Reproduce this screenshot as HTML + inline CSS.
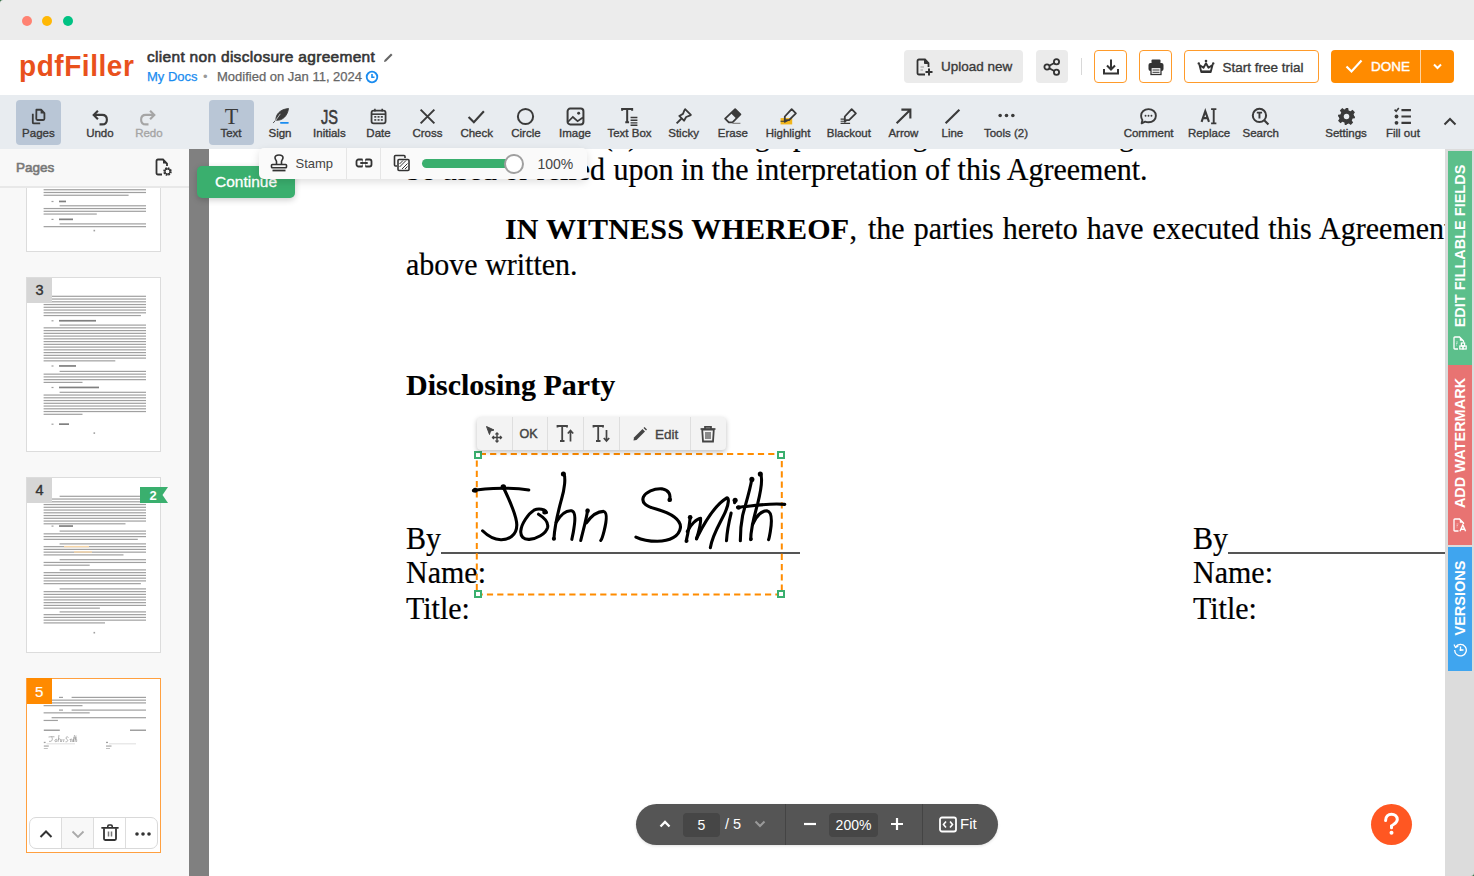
<!DOCTYPE html>
<html><head><meta charset="utf-8">
<style>
*{margin:0;padding:0;box-sizing:border-box}
html,body{width:1474px;height:876px;overflow:hidden;background:#fff;font-family:"Liberation Sans",sans-serif}
.a{position:absolute}
#titlebar{left:0;top:0;width:1474px;height:40px;background:#ececec}
.tl{position:absolute;top:16px;width:10px;height:10px;border-radius:50%}
#header{left:0;top:40px;width:1474px;height:55px;background:#fff}
#toolbar{left:0;top:95px;width:1474px;height:54px;background:#e8ecf0}
.tool{position:absolute;top:99.5px;height:45.5px;text-align:center;color:#3a3a3a}
.tool .lbl{position:absolute;left:-40px;right:-40px;top:27.3px;font-size:11.5px;font-weight:400;-webkit-text-stroke:0.35px currentColor;white-space:nowrap;text-align:center;line-height:13px}
.tool svg{position:absolute;left:50%;top:7.6px;margin-left:-9.5px;width:19px;height:19px;overflow:visible}
.sel{background:#b9c6d6;border-radius:4px}
#sidebar{left:0;top:149px;width:189px;height:727px;background:#f8f8f8;overflow:hidden}
#strip{left:189px;top:149px;width:20px;height:727px;background:#808080}
#doc{left:209px;top:149px;width:1236px;height:727px;background:#fff;overflow:hidden}
.ser{position:absolute;font-family:"Liberation Serif",serif;font-size:30px;color:#000;white-space:nowrap;line-height:30px;transform:scaleY(1.05);transform-origin:0 25px;-webkit-text-stroke:0.2px #000}
#rpanel{left:1445px;top:149px;width:29px;height:727px;background:#dcdcdc}
.tab{position:absolute;left:3px;width:24px}
.tabtxt{position:absolute;left:50%;top:50%;transform:translate(-50%,-50%) rotate(-90deg);color:#fff;font-weight:bold;font-size:14.5px;white-space:nowrap}
.hbtn{position:absolute;top:50px;height:33px;border-radius:4px}
.thumb{position:absolute;left:26px;width:135px;height:175.5px;background:#fff;border:1px solid #dcdcdc}
.badge{position:absolute;left:0;top:0;width:25px;height:25px;background:#d6d6d6;color:#333;font-size:14.5px;text-align:center;line-height:25px;-webkit-text-stroke:0.4px currentColor}
</style></head><body>

<!-- title bar -->
<div id="titlebar" class="a">
  <div class="tl" style="left:22px;background:#ff8272"></div>
  <div class="tl" style="left:42.3px;background:#ffb805"></div>
  <div class="tl" style="left:62.6px;background:#00c283"></div>
</div>

<!-- header -->
<div id="header" class="a">
  <div class="a" style="left:19px;top:11px;font-size:28px;font-weight:bold;color:#e9511c;letter-spacing:0.55px;transform:scaleY(1.04);transform-origin:0 26px">pdfFiller</div>
  <div class="a" style="left:147px;top:7.5px;font-size:15.5px;font-weight:400;color:#353535;white-space:nowrap;letter-spacing:0.3px;-webkit-text-stroke:0.6px #353535">client non disclosure agreement</div>
  <svg class="a" style="left:383px;top:12px" width="11" height="11" viewBox="0 0 11 11"><path d="M1 10 L1.5 8 L8 1.5 L9.5 3 L3 9.5 Z" fill="#666"/></svg>
  <div class="a" style="left:147px;top:29px;font-size:13px;color:#1a8cf0;white-space:nowrap;-webkit-text-stroke:0.25px #1a8cf0">My Docs</div>
  <div class="a" style="left:203px;top:29px;font-size:13px;color:#999">•</div>
  <div class="a" style="left:217px;top:29px;font-size:13px;color:#666;white-space:nowrap;-webkit-text-stroke:0.25px #666">Modified on Jan 11, 2024</div>
  <svg class="a" style="left:365px;top:30px" width="14" height="14" viewBox="0 0 14 14"><circle cx="7" cy="7" r="5.3" fill="none" stroke="#1a8cf0" stroke-width="1.8"/><path d="M7 4 V7.3 H9.5" fill="none" stroke="#1a8cf0" stroke-width="1.6"/></svg>
</div>

<!-- header buttons -->
<div class="hbtn" style="left:904px;width:119px;background:#ebebeb">
  <svg class="a" style="left:12px;top:8px" width="17" height="18" viewBox="0 0 17 18"><path d="M9 16.5 H3 Q1.5 16.5 1.5 15 V3 Q1.5 1.5 3 1.5 H9 L12.5 5 V9" fill="none" stroke="#333" stroke-width="1.8"/><path d="M8.5 1.5 V5.5 H12.5" fill="#333" stroke="#333" stroke-width="1"/><path d="M4.5 9 H8 M4.5 12 H7" stroke="#999" stroke-width="1.2"/><path d="M13 10.5 V17.5 M9.5 14 H16.5" stroke="#333" stroke-width="2"/></svg>
  <div class="a" style="left:37px;top:8.5px;font-size:13.5px;font-weight:400;color:#3a3a3a;white-space:nowrap;-webkit-text-stroke:0.35px #3a3a3a">Upload new</div>
</div>
<div class="hbtn" style="left:1036px;width:32px;background:#ebebeb">
  <svg class="a" style="left:7px;top:8px" width="18" height="18" viewBox="0 0 18 18"><circle cx="4" cy="9" r="2.6" fill="none" stroke="#333" stroke-width="1.8"/><circle cx="13.5" cy="3.8" r="2.6" fill="none" stroke="#333" stroke-width="1.8"/><circle cx="13.5" cy="14.2" r="2.6" fill="none" stroke="#333" stroke-width="1.8"/><path d="M6.2 7.7 L11.3 5 M6.2 10.3 L11.3 13" stroke="#333" stroke-width="1.8"/></svg>
</div>
<div class="a" style="left:1081px;top:58px;width:1px;height:17px;background:#d8d8d8"></div>
<div class="hbtn" style="left:1094px;width:33px;border:1px solid #ff9b2a;background:#fff">
  <svg class="a" style="left:7px;top:7px" width="18" height="18" viewBox="0 0 18 18"><path d="M9 1.5 V11 M5 7.5 L9 11.5 L13 7.5" fill="none" stroke="#333" stroke-width="2"/><path d="M2 11 V15.5 H16 V11" fill="none" stroke="#333" stroke-width="2"/></svg>
</div>
<div class="hbtn" style="left:1139px;width:33px;border:1px solid #ff9b2a;background:#fff">
  <svg class="a" style="left:7px;top:7px" width="18" height="18" viewBox="0 0 18 18"><rect x="4.5" y="1.5" width="9" height="4" rx="1" fill="#333"/><rect x="1.5" y="5" width="15" height="8" rx="2" fill="#333"/><rect x="4" y="9.5" width="10" height="7" fill="#fff" stroke="#333" stroke-width="1.3"/><path d="M5.5 12 H12.5 M5.5 14.3 H12.5" stroke="#333" stroke-width="1"/></svg>
</div>
<div class="hbtn" style="left:1184px;width:135px;border:1px solid #ff9b2a;background:#fff">
  <svg class="a" style="left:12px;top:8px" width="18" height="16" viewBox="0 0 18 16"><circle cx="9" cy="2" r="1.3" fill="#333"/><circle cx="1.8" cy="4.5" r="1.2" fill="#333"/><circle cx="16.2" cy="4.5" r="1.2" fill="#333"/><path d="M2.5 6 L4.3 13 H13.7 L15.5 6 L11.5 8.8 L9 4.3 L6.5 8.8 Z" fill="none" stroke="#333" stroke-width="1.9" stroke-linejoin="round"/><path d="M4.5 12.5 H13.5" stroke="#333" stroke-width="2.2"/></svg>
  <div class="a" style="left:37.5px;top:8.5px;font-size:13.5px;font-weight:400;color:#3a3a3a;white-space:nowrap;-webkit-text-stroke:0.35px #3a3a3a">Start free trial</div>
</div>
<div class="hbtn" style="left:1331px;width:123px;background:#ff8b00">
  <svg class="a" style="left:14px;top:9px" width="18" height="15" viewBox="0 0 18 15"><path d="M1.5 7.5 L6.5 12.5 L16.5 1.5" fill="none" stroke="#fff" stroke-width="2.2"/></svg>
  <div class="a" style="left:40px;top:8.5px;font-size:13.5px;font-weight:400;color:#fff;white-space:nowrap;-webkit-text-stroke:0.4px #fff">DONE</div>
  <div class="a" style="left:89px;top:0;width:1px;height:33px;background:#ffd39e"></div>
  <svg class="a" style="left:101px;top:12px" width="11" height="9" viewBox="0 0 11 9"><path d="M2 2.5 L5.5 6 L9 2.5" fill="none" stroke="#fff" stroke-width="2"/></svg>
</div>

<!-- toolbar -->
<div id="toolbar" class="a"></div>
<div id="tools">
<div class="tool sel" style="left:15.9px;width:45px"><svg viewBox="0 0 18 18"><path d="M7 2.6 H11.5 L14.6 5.7 V11.2 Q14.6 12.3 13.5 12.3 H8 Q6.9 12.3 6.9 11.2 Z" fill="none" stroke="#3a3a3a" stroke-width="1.7" stroke-linejoin="round"/><path d="M11 2.4 V6.2 H14.8 Z" fill="#3a3a3a"/><path d="M3.6 6.3 V14.6 Q3.6 15.6 4.6 15.6 H10.6" fill="none" stroke="#3a3a3a" stroke-width="1.7"/></svg><div class="lbl" style="color:#3a3a3a">Pages</div></div>
<div class="tool" style="left:77.4px;width:45px"><svg viewBox="0 0 18 18"><path d="M4 7.5 H11.5 Q16 7.5 16 12 Q16 16.5 11.5 16.5 H9" fill="none" stroke="#3a3a3a" stroke-width="2"/><path d="M7.5 3.5 L3.5 7.5 L7.5 11.5" fill="none" stroke="#3a3a3a" stroke-width="2"/></svg><div class="lbl" style="color:#3a3a3a">Undo</div></div>
<div class="tool" style="left:126.4px;width:45px"><svg viewBox="0 0 18 18"><path d="M14 7.5 H6.5 Q2 7.5 2 12 Q2 16.5 6.5 16.5 H9" fill="none" stroke="#a5a5a5" stroke-width="2"/><path d="M10.5 3.5 L14.5 7.5 L10.5 11.5" fill="none" stroke="#a5a5a5" stroke-width="2"/></svg><div class="lbl" style="color:#a5a5a5">Redo</div></div>
<div class="tool sel" style="left:208.5px;width:45px"><svg viewBox="0 0 18 18"><text x="9" y="16.5" text-anchor="middle" font-family="Liberation Serif" font-size="21" fill="#3a3a3a">T</text></svg><div class="lbl" style="color:#3a3a3a">Text</div></div>
<div class="tool" style="left:257.5px;width:45px"><svg viewBox="0 0 18 18"><path d="M2 15.2 L7.5 9 M4.6 12 C4.6 7 8.5 2.2 16.6 1.4 C15.6 8.5 11 12.8 5.3 12.6 Z" fill="#3a3a3a" stroke="#3a3a3a" stroke-width="0.8"/><path d="M8.8 6.5 L4.2 13" stroke="#e8ecf0" stroke-width="0.7"/><path d="M9.4 15 H16" stroke="#1a8cf0" stroke-width="1.8" stroke-linecap="round"/></svg><div class="lbl" style="color:#3a3a3a">Sign</div></div>
<div class="tool" style="left:306.9px;width:45px"><svg viewBox="0 0 18 18"><text x="9" y="15.9" text-anchor="middle" font-family="Liberation Sans" font-size="20" fill="#3a3a3a" transform="translate(9 0) scale(0.69 1) translate(-9 0)" stroke="#3a3a3a" stroke-width="0.6">JS</text></svg><div class="lbl" style="color:#3a3a3a">Initials</div></div>
<div class="tool" style="left:356.0px;width:45px"><svg viewBox="0 0 18 18"><rect x="2.4" y="3.4" width="13.3" height="12.1" rx="2" fill="none" stroke="#3a3a3a" stroke-width="1.7"/><path d="M2.4 6.8 H15.7" stroke="#3a3a3a" stroke-width="1.5"/><path d="M5.6 1.7 V4.3 M12.5 1.7 V4.3" stroke="#3a3a3a" stroke-width="1.5"/><g fill="#3a3a3a"><rect x="5" y="8.6" width="1.9" height="1.5"/><rect x="8.1" y="8.6" width="1.9" height="1.5"/><rect x="11.2" y="8.6" width="1.9" height="1.5"/><rect x="5" y="11.5" width="1.9" height="1.5"/><rect x="8.1" y="11.5" width="1.9" height="1.5"/><rect x="11.2" y="11.5" width="1.9" height="1.5"/></g></svg><div class="lbl" style="color:#3a3a3a">Date</div></div>
<div class="tool" style="left:405.0px;width:45px"><svg viewBox="0 0 18 18"><path d="M2.5 2.5 L15.5 15.5 M15.5 2.5 L2.5 15.5" stroke="#3a3a3a" stroke-width="1.9"/></svg><div class="lbl" style="color:#3a3a3a">Cross</div></div>
<div class="tool" style="left:454.2px;width:45px"><svg viewBox="0 0 18 18"><path d="M1.5 9.5 L6.5 14.5 L16 4" fill="none" stroke="#3a3a3a" stroke-width="2"/></svg><div class="lbl" style="color:#3a3a3a">Check</div></div>
<div class="tool" style="left:503.4px;width:45px"><svg viewBox="0 0 18 18"><circle cx="9" cy="9" r="7.2" fill="none" stroke="#3a3a3a" stroke-width="1.9"/></svg><div class="lbl" style="color:#3a3a3a">Circle</div></div>
<div class="tool" style="left:552.5px;width:45px"><svg viewBox="0 0 18 18"><rect x="1.5" y="1.5" width="15" height="15" rx="2.5" fill="none" stroke="#3a3a3a" stroke-width="1.9"/><path d="M2 14 L6.5 9.5 L11 13.5 L16 10" fill="none" stroke="#3a3a3a" stroke-width="1.6"/><circle cx="12" cy="6" r="1.4" fill="#3a3a3a"/></svg><div class="lbl" style="color:#3a3a3a">Image</div></div>
<div class="tool" style="left:607.0px;width:45px"><svg viewBox="0 0 18 18"><path d="M2 3.5 V2 H11.5 V3.5 M6.8 2 V14.5 M5 14.5 H8.6" fill="none" stroke="#3a3a3a" stroke-width="1.9"/><path d="M10 10 H16.5 M10 12.5 H16.5 M10 15 H16.5 M10 17.3 H16.5" stroke="#3a3a3a" stroke-width="1.3"/></svg><div class="lbl" style="color:#3a3a3a">Text Box</div></div>
<div class="tool" style="left:661.1px;width:45px"><svg viewBox="0 0 18 18"><path d="M10.5 2 L16 7.5 L14.8 8.2 L11.5 9.5 L9.5 13 L5 8.5 L8.5 6.5 L9.8 3.2 Z" fill="none" stroke="#3a3a3a" stroke-width="1.7" stroke-linejoin="round"/><path d="M7 11 L2.5 15.5" stroke="#3a3a3a" stroke-width="1.9"/></svg><div class="lbl" style="color:#3a3a3a">Sticky</div></div>
<div class="tool" style="left:710.3px;width:45px"><svg viewBox="0 0 18 18"><path d="M11.5 2 L16.5 7 L9 14.5 H5.5 L2 11 Z" fill="none" stroke="#3a3a3a" stroke-width="1.7" stroke-linejoin="round"/><path d="M11.5 2 L16.5 7 L12.5 11 L7.5 6 Z" fill="#3a3a3a"/><path d="M9 15.5 H16.5" stroke="#888" stroke-width="1.2"/></svg><div class="lbl" style="color:#3a3a3a">Erase</div></div>
<div class="tool" style="left:765.5px;width:45px"><svg viewBox="0 0 18 18"><rect x="1.5" y="10.5" width="11" height="6" fill="#f1b51c"/><path d="M1.5 13.5 H8" stroke="#3a3a3a" stroke-width="1"/><path d="M12 2 L16 6 L9.5 12.5 L7 12.5 L5.5 14 L5.5 11 L5.5 9 Z" fill="none" stroke="#3a3a3a" stroke-width="1.7" stroke-linejoin="round"/></svg><div class="lbl" style="color:#3a3a3a">Highlight</div></div>
<div class="tool" style="left:826.4px;width:45px"><svg viewBox="0 0 18 18"><path d="M1.5 11.5 H6 M1.5 13.5 H6 M1.5 15.5 H10.5" stroke="#3a3a3a" stroke-width="1"/><path d="M12 2 L16 6 L9.5 12.5 L7 12.5 L5.5 14 L5.5 11 L5.5 9 Z" fill="none" stroke="#3a3a3a" stroke-width="1.7" stroke-linejoin="round"/></svg><div class="lbl" style="color:#3a3a3a">Blackout</div></div>
<div class="tool" style="left:880.9px;width:45px"><svg viewBox="0 0 18 18"><path d="M2.5 15.5 L15.5 2.5 M7 2.5 H15.5 V11" fill="none" stroke="#3a3a3a" stroke-width="2"/></svg><div class="lbl" style="color:#3a3a3a">Arrow</div></div>
<div class="tool" style="left:929.9px;width:45px"><svg viewBox="0 0 18 18"><path d="M2.5 15.5 L15.5 2.5" stroke="#3a3a3a" stroke-width="2"/></svg><div class="lbl" style="color:#3a3a3a">Line</div></div>
<div class="tool" style="left:983.5px;width:45px"><svg viewBox="0 0 18 18"><circle cx="3" cy="8" r="1.7" fill="#3a3a3a"/><circle cx="9" cy="8" r="1.7" fill="#3a3a3a"/><circle cx="15" cy="8" r="1.7" fill="#3a3a3a"/></svg><div class="lbl" style="color:#3a3a3a">Tools (2)</div></div>
<div class="tool" style="left:1126.1px;width:45px"><svg viewBox="0 0 18 18"><path d="M9 2 C13 2 16 4.8 16 8.3 C16 11.8 13 14.5 9 14.5 C7.8 14.5 6.8 14.3 5.8 13.9 L2.5 15.5 L3.2 12.3 C2.4 11.2 2 9.8 2 8.3 C2 4.8 5 2 9 2 Z" fill="none" stroke="#3a3a3a" stroke-width="1.8" stroke-linejoin="round"/><circle cx="6.2" cy="8.3" r="0.9" fill="#3a3a3a"/><circle cx="9" cy="8.3" r="0.9" fill="#3a3a3a"/><circle cx="11.8" cy="8.3" r="0.9" fill="#3a3a3a"/></svg><div class="lbl" style="color:#3a3a3a">Comment</div></div>
<div class="tool" style="left:1186.5px;width:45px"><svg viewBox="0 0 18 18"><path d="M1.5 14 L5 4 L8.5 14 M3 10.5 H7" fill="none" stroke="#3a3a3a" stroke-width="2"/><path d="M10.5 2 H15.5 M10.5 15.5 H15.5 M13 2 V15.5" stroke="#3a3a3a" stroke-width="1.8"/></svg><div class="lbl" style="color:#3a3a3a">Replace</div></div>
<div class="tool" style="left:1238.2px;width:45px"><svg viewBox="0 0 18 18"><circle cx="8" cy="8" r="6.3" fill="none" stroke="#3a3a3a" stroke-width="1.9"/><path d="M12.5 12.5 L16.5 16.5" stroke="#3a3a3a" stroke-width="2"/><path d="M5.5 5.3 H10.5 M8 5.3 V11" stroke="#3a3a3a" stroke-width="1.8"/></svg><div class="lbl" style="color:#3a3a3a">Search</div></div>
<div class="tool" style="left:1323.5px;width:45px"><svg viewBox="0 0 18 18"><g transform="translate(9 9)"><path d="M-1.6 -8 H1.6 L2 -5.8 L3.9 -5 L5.7 -6.3 L8 -4 L6.7 -2.2 L7.4 -0.3 L8 0 V1.6 L5.8 2 L5 3.9 L6.3 5.7 L4 8 L2.2 6.7 L0.3 7.4 L0 8 H-1.6 L-2 5.8 L-3.9 5 L-5.7 6.3 L-8 4 L-6.7 2.2 L-7.4 0.3 L-8 0 V-1.6 L-5.8 -2 L-5 -3.9 L-6.3 -5.7 L-4 -8 L-2.2 -6.7 L-0.3 -7.4 Z" fill="#3a3a3a"/><circle r="2.6" fill="#e8ecf0"/></g></svg><div class="lbl" style="color:#3a3a3a">Settings</div></div>
<div class="tool" style="left:1380.4px;width:45px"><svg viewBox="0 0 18 18"><path d="M1.5 2.5 L3 4 L5.5 1" fill="none" stroke="#3a3a3a" stroke-width="1.5"/><circle cx="3.3" cy="9" r="1.8" fill="#3a3a3a"/><circle cx="3.3" cy="15" r="1.8" fill="#3a3a3a"/><path d="M8 3 H17 M8 9 H17 M8 15 H17" stroke="#3a3a3a" stroke-width="2"/></svg><div class="lbl" style="color:#3a3a3a">Fill out</div></div>
<svg class="a" style="left:1443px;top:116px" width="14" height="10" viewBox="0 0 14 10"><path d="M1.5 8.5 L7 3 L12.5 8.5" fill="none" stroke="#3a3a3a" stroke-width="2"/></svg>
</div>

<!-- sidebar -->
<div id="sidebar" class="a">
  <div class="a" style="left:16px;top:11px;font-size:13.5px;font-weight:400;color:#777;-webkit-text-stroke:0.6px #777">Pages</div>
  <svg class="a" style="left:155px;top:9px" width="18" height="19" viewBox="0 0 18 19"><path d="M7 16.5 H3 Q1.5 16.5 1.5 15 V3 Q1.5 1.5 3 1.5 H8 L12 5.5 V8" fill="none" stroke="#333" stroke-width="1.8"/><path d="M8 1.5 V5.5 H12" fill="#333"/><g transform="translate(12.5 13.5)"><circle r="3.2" fill="none" stroke="#333" stroke-width="2.2" stroke-dasharray="1.6 0.9"/><circle r="2.6" fill="none" stroke="#333" stroke-width="1.2"/></g></svg>
  <div class="a" style="left:0;top:38px;width:189px;height:689px;overflow:hidden">
  <div class="thumb" style="top:-111px"><svg class="a" style="left:0;top:0" width="135" height="175" viewBox="0 0 135 175"><g fill="#a0a0a0"><rect x="16.6" y="109.40" width="102.4" height="1.2"/><rect x="16.6" y="112.15" width="102.4" height="1.2"/><rect x="16.6" y="114.90" width="102.4" height="1.2"/><rect x="16.6" y="117.65" width="85.0" height="1.2"/><rect x="32" y="123.6" width="7" height="1.7" fill="#808080"/><rect x="24.5" y="123.9" width="2" height="1.2"/><rect x="32.6" y="128.20" width="86.4" height="1.2"/><rect x="16.6" y="130.95" width="102.4" height="1.2"/><rect x="16.6" y="133.70" width="102.4" height="1.2"/><rect x="16.6" y="136.45" width="53.2" height="1.2"/><rect x="32" y="141.5" width="14" height="1.7" fill="#808080"/><rect x="24.5" y="141.8" width="2" height="1.2"/><rect x="32.6" y="146.30" width="86.4" height="1.2"/><rect x="16.6" y="149.05" width="102.4" height="1.2"/><rect x="66.5" y="152.8" width="1.6" height="1.6"/></g></svg></div><div class="thumb" style="top:89.5px"><svg class="a" style="left:0;top:0" width="135" height="175" viewBox="0 0 135 175"><g fill="#a0a0a0"><rect x="16.6" y="17.70" width="102.4" height="1.2"/><rect x="16.6" y="20.45" width="102.4" height="1.2"/><rect x="16.6" y="23.20" width="102.4" height="1.2"/><rect x="16.6" y="25.95" width="102.4" height="1.2"/><rect x="16.6" y="28.70" width="102.4" height="1.2"/><rect x="16.6" y="31.45" width="102.4" height="1.2"/><rect x="16.6" y="34.20" width="102.4" height="1.2"/><rect x="16.6" y="36.95" width="97.3" height="1.2"/><rect x="32" y="41.9" width="37" height="1.7" fill="#808080"/><rect x="24.5" y="42.2" width="2" height="1.2"/><rect x="32.6" y="46.50" width="86.4" height="1.2"/><rect x="16.6" y="49.25" width="102.4" height="1.2"/><rect x="16.6" y="52.00" width="102.4" height="1.2"/><rect x="16.6" y="54.75" width="102.4" height="1.2"/><rect x="16.6" y="57.50" width="102.4" height="1.2"/><rect x="16.6" y="60.25" width="102.4" height="1.2"/><rect x="16.6" y="63.00" width="102.4" height="1.2"/><rect x="16.6" y="65.75" width="102.4" height="1.2"/><rect x="16.6" y="68.50" width="102.4" height="1.2"/><rect x="16.6" y="71.25" width="102.4" height="1.2"/><rect x="16.6" y="74.00" width="102.4" height="1.2"/><rect x="16.6" y="76.75" width="102.4" height="1.2"/><rect x="16.6" y="79.50" width="102.4" height="1.2"/><rect x="16.6" y="82.25" width="71.7" height="1.2"/><rect x="32" y="87.1" width="17" height="1.7" fill="#808080"/><rect x="24.5" y="87.4" width="2" height="1.2"/><rect x="32.6" y="92.80" width="86.4" height="1.2"/><rect x="16.6" y="95.55" width="102.4" height="1.2"/><rect x="16.6" y="98.30" width="102.4" height="1.2"/><rect x="16.6" y="101.05" width="102.4" height="1.2"/><rect x="16.6" y="103.80" width="38.9" height="1.2"/><rect x="32" y="108.6" width="40" height="1.7" fill="#808080"/><rect x="24.5" y="108.9" width="2" height="1.2"/><rect x="32.6" y="113.70" width="86.4" height="1.2"/><rect x="16.6" y="116.45" width="102.4" height="1.2"/><rect x="16.6" y="119.20" width="102.4" height="1.2"/><rect x="16.6" y="121.95" width="102.4" height="1.2"/><rect x="16.6" y="124.70" width="102.4" height="1.2"/><rect x="16.6" y="127.45" width="102.4" height="1.2"/><rect x="16.6" y="130.20" width="102.4" height="1.2"/><rect x="16.6" y="132.95" width="102.4" height="1.2"/><rect x="16.6" y="135.70" width="38.9" height="1.2"/><rect x="32" y="145.3" width="10" height="1.7" fill="#808080"/><rect x="24.5" y="145.6" width="2" height="1.2"/><rect x="66.5" y="154.3" width="1.6" height="1.6"/></g></svg><div class="badge">3</div></div><div class="thumb" style="top:290px"><svg class="a" style="left:0;top:0" width="135" height="175" viewBox="0 0 135 175"><g fill="#a0a0a0"><rect x="32.6" y="17.70" width="86.4" height="1.2"/><rect x="16.6" y="20.45" width="102.4" height="1.2"/><rect x="16.6" y="23.20" width="102.4" height="1.2"/><rect x="16.6" y="25.95" width="102.4" height="1.2"/><rect x="16.6" y="28.70" width="102.4" height="1.2"/><rect x="16.6" y="31.45" width="102.4" height="1.2"/><rect x="16.6" y="34.20" width="102.4" height="1.2"/><rect x="16.6" y="36.95" width="102.4" height="1.2"/><rect x="16.6" y="39.70" width="102.4" height="1.2"/><rect x="16.6" y="42.45" width="102.4" height="1.2"/><rect x="16.6" y="45.20" width="81.9" height="1.2"/><rect x="32" y="47.2" width="14" height="1.7" fill="#808080"/><rect x="24.5" y="47.5" width="2" height="1.2"/><rect x="32.6" y="52.50" width="86.4" height="1.2"/><rect x="16.6" y="55.25" width="102.4" height="1.2"/><rect x="16.6" y="58.00" width="102.4" height="1.2"/><rect x="16.6" y="60.75" width="94.2" height="1.2"/><rect x="32.6" y="65.30" width="86.4" height="1.2"/><rect x="16.6" y="68.05" width="102.4" height="1.2"/><rect x="16.6" y="70.80" width="102.4" height="1.2"/><rect x="16.6" y="73.55" width="102.4" height="1.2"/><rect x="16.6" y="76.30" width="79.9" height="1.2"/><rect x="32.6" y="81.10" width="86.4" height="1.2"/><rect x="16.6" y="83.85" width="102.4" height="1.2"/><rect x="16.6" y="86.60" width="46.1" height="1.2"/><rect x="32.6" y="91.30" width="86.4" height="1.2"/><rect x="16.6" y="94.05" width="102.4" height="1.2"/><rect x="16.6" y="96.80" width="102.4" height="1.2"/><rect x="16.6" y="99.55" width="102.4" height="1.2"/><rect x="16.6" y="102.30" width="102.4" height="1.2"/><rect x="16.6" y="105.05" width="97.3" height="1.2"/><rect x="32.6" y="110.30" width="86.4" height="1.2"/><rect x="16.6" y="113.05" width="102.4" height="1.2"/><rect x="16.6" y="115.80" width="102.4" height="1.2"/><rect x="16.6" y="118.55" width="102.4" height="1.2"/><rect x="16.6" y="121.30" width="102.4" height="1.2"/><rect x="16.6" y="124.05" width="102.4" height="1.2"/><rect x="16.6" y="126.80" width="102.4" height="1.2"/><rect x="16.6" y="129.55" width="56.3" height="1.2"/><rect x="32.6" y="133.30" width="86.4" height="1.2"/><rect x="16.6" y="136.05" width="102.4" height="1.2"/><rect x="16.6" y="138.80" width="102.4" height="1.2"/><rect x="16.6" y="141.55" width="102.4" height="1.2"/><rect x="16.6" y="144.30" width="61.4" height="1.2"/><rect x="66.5" y="153.9" width="1.6" height="1.6"/><rect x="37" y="67.9" width="25" height="1.4" fill="#f7d6a8"/><rect x="47" y="73.3" width="18" height="1.4" fill="#f7d6a8"/></g></svg><div class="badge">4</div></div><svg class="a" style="left:140px;top:300px" width="29" height="17" viewBox="0 0 29 17"><path d="M0 0 H28 L22.5 8 L28 16 H0 Z" fill="#3aaf6e"/><text x="13" y="12.5" text-anchor="middle" font-family="Liberation Sans" font-weight="bold" font-size="13" fill="#fff">2</text></svg><div class="thumb" style="top:490.5px;border:1.5px solid #ffa040"><svg class="a" style="left:0;top:0" width="135" height="175" viewBox="0 0 135 175"><g fill="#a0a0a0"><rect x="44.6" y="17.80" width="74.4" height="1.2"/><rect x="16.6" y="20.55" width="102.4" height="1.2"/><rect x="16.6" y="23.30" width="102.4" height="1.2"/><rect x="16.6" y="26.05" width="38.9" height="1.2"/><rect x="32" y="17.8" width="4" height="1.2"/><rect x="44.6" y="30.50" width="74.4" height="1.2"/><rect x="16.6" y="33.25" width="46.1" height="1.2"/><rect x="32" y="30.5" width="4" height="1.2"/><rect x="24.6" y="38.10" width="94.4" height="1.2"/><rect x="16.6" y="40.85" width="14.3" height="1.2"/><rect x="16.8" y="50.5" width="16" height="1.5"/><rect x="103" y="50.5" width="16" height="1.5"/><rect x="16.8" y="62.8" width="1.8" height="1.3"/><rect x="19.5" y="64.6" width="28.5" height="0.6" fill="#c8c8c8"/><rect x="16.8" y="66.5" width="5" height="1.1"/><rect x="16.8" y="69" width="4" height="1" fill="#c0c0c0"/><rect x="79" y="62.8" width="2" height="1.3"/><rect x="82" y="64.6" width="27" height="0.6" fill="#c8c8c8"/><rect x="79" y="66.5" width="5.5" height="1.1"/><rect x="79" y="69" width="4" height="1" fill="#c0c0c0"/><path d="M21.5 58 C23.5 57.6 25.5 57.6 27.5 57.8 M24.5 57.6 C26 60 25.5 63 22 62.3 M28 61 C29.5 59.5 30.5 60.5 29.5 62.5 C28.5 63 27.5 62.5 28 61 M32 56 L31 63 M31.3 60.5 C33 59 34 60 33.5 63 M35 60 L34.5 63 M37 60 L36.5 63 M41.5 58.5 C40 57 38 58.5 39.5 60 C41.5 61 41 63 38.5 62.8 M42.5 61 C43.5 59.5 44 60 43.5 63 M44 60.5 C44.5 59.5 45.5 59.5 45 63 M46.5 60 L46 63 M47.5 56 L46.5 63 M49 56.5 L48 63 M46 59 H50 M48.5 60.5 C49.5 59.5 50 60.5 49.5 63" stroke="#777" stroke-width="0.55" fill="none"/></g></svg><div class="badge" style="background:#ff8a00;color:#fff;left:-0.5px;top:-0.5px;width:25.5px;height:25.5px;line-height:27px;font-size:15px;-webkit-text-stroke:0.2px #fff">5</div><div class="a" style="left:2px;top:138.3px;width:129px;height:32.5px;background:#fff;border:1px solid #d9d9d9;border-radius:7px;overflow:hidden">
<div class="a" style="left:31px;top:0;width:33px;height:33px;background:#f8f8f8;border-left:1px solid #ddd;border-right:1px solid #ddd"></div>
<div class="a" style="left:95px;top:0;width:1px;height:33px;background:#ddd"></div>
<svg class="a" style="left:8px;top:9px" width="16" height="14" viewBox="0 0 16 14"><path d="M2.5 10 L8 4.5 L13.5 10" fill="none" stroke="#333" stroke-width="2"/></svg>
<svg class="a" style="left:40px;top:9px" width="16" height="14" viewBox="0 0 16 14"><path d="M2.5 4.5 L8 10 L13.5 4.5" fill="none" stroke="#aaa" stroke-width="1.8"/></svg>
<svg class="a" style="left:71px;top:6.5px" width="18" height="18" viewBox="0 0 18 18"><path d="M1 3.8 H17" stroke="#333" stroke-width="1.7" stroke-linecap="round"/><path d="M6.8 3.5 V2.2 Q6.8 1 8 1 H10 Q11.2 1 11.2 2.2 V3.5" fill="none" stroke="#333" stroke-width="1.6"/><path d="M3 4.2 V14.8 Q3 16 4.2 16 H13.8 Q15 16 15 14.8 V4.2" fill="none" stroke="#333" stroke-width="1.8"/><path d="M7.5 7.5 V12.5 M10.5 7.5 V12.5" stroke="#777" stroke-width="1.5"/></svg>
<svg class="a" style="left:104px;top:12px" width="18" height="8" viewBox="0 0 18 8"><circle cx="3" cy="4" r="1.8" fill="#333"/><circle cx="9" cy="4" r="1.8" fill="#333"/><circle cx="15" cy="4" r="1.8" fill="#333"/></svg>
</div></div>
  </div>
  <div class="a" style="left:0;top:37px;width:189px;height:1.5px;background:#e8e8e8"></div>
</div>
<div id="strip" class="a"></div>

<!-- document -->
<div id="doc" class="a">
  <div class="ser" style="left:394px;top:-29px">(h)</div>
  <div class="ser" style="left:492.5px;top:-29px;word-spacing:2px">Paragraph headings used in this Agreement are for reference only and shall not</div>
  <div class="ser" style="left:197px;top:6px">be used or relied</div><div class="ser" style="left:404.5px;top:6px">upon in the interpretation of this Agreement.</div>
  <div class="ser" style="left:296px;top:65.4px;letter-spacing:0.2px;transform:none;-webkit-text-stroke:0.1px #000"><b>IN WITNESS WHEREOF</b></div><div class="ser" style="left:640.5px;top:65.4px">,</div><div class="ser" style="left:659px;top:65.4px;word-spacing:1.6px">the parties hereto have executed this Agreement as of the date first</div>
  <div class="ser" style="left:197px;top:100.6px">above written.</div>
  <div class="ser" style="left:197px;top:221px;transform:none;-webkit-text-stroke:0.1px #000"><b>Disclosing Party</b></div>
  <div class="ser" style="left:197px;top:374.5px">By</div>
  <div class="a" style="left:232px;top:403px;width:359px;height:1.5px;background:#555"></div>
  <div class="ser" style="left:197px;top:409px">Name:</div>
  <div class="ser" style="left:197px;top:445px">Title:</div>
  <div class="ser" style="left:984px;top:374.5px">By</div>
  <div class="a" style="left:1019px;top:403px;width:260px;height:1.5px;background:#555"></div>
  <div class="ser" style="left:984px;top:409px">Name:</div>
  <div class="ser" style="left:984px;top:445px">Title:</div>
</div>

<div id="rpanel" class="a">
  <div class="tab" style="top:2px;height:214px;background:#5cbf8b"><div class="tabtxt" style="margin-top:-12px">EDIT FILLABLE FIELDS</div>
    <svg class="a" style="left:5px;top:185px" width="14" height="14" viewBox="0 0 14 14"><path d="M5 13 H1.8 Q1 13 1 12.2 V1.8 Q1 1 1.8 1 H6.5 L10.5 5 V6.5" fill="none" stroke="#fff" stroke-width="1.3"/><path d="M6.8 1.3 V4.8 H10.3 Z" fill="#fff"/><path d="M3 6 H5 M3 7.5 H4.5 M3 9 H4" stroke="#cfeedd" stroke-width="0.8"/><rect x="6.8" y="10" width="3.2" height="3" fill="none" stroke="#fff" stroke-width="1.2"/><rect x="10" y="10" width="3.2" height="3" fill="none" stroke="#fff" stroke-width="1.2"/><rect x="8.4" y="7" width="3.2" height="3" fill="none" stroke="#fff" stroke-width="1.2"/></svg>
  </div>
  <div class="tab" style="top:216px;height:180px;background:#e87372"><div class="tabtxt" style="margin-top:-12px">ADD WATERMARK</div>
    <svg class="a" style="left:5px;top:153px" width="14" height="14" viewBox="0 0 14 14"><path d="M5.5 13 H1.8 Q1 13 1 12.2 V1.8 Q1 1 1.8 1 H6.5 L10.5 5 V6" fill="none" stroke="#fff" stroke-width="1.3"/><path d="M6.8 1.3 V4.8 H10.3 Z" fill="#fff"/><path d="M3.5 6 H5.5 M3.5 7.5 H5 M3.5 9 H4.5" stroke="#f5c5c4" stroke-width="0.8"/><path d="M7 13.3 L9.8 7 L12.6 13.3 M8 11.2 H11.6" fill="none" stroke="#fff" stroke-width="1.4"/></svg>
  </div>
  <div class="tab" style="top:398px;height:124px;background:#3fa5ef"><div class="tabtxt" style="margin-top:-11px">VERSIONS</div>
    <svg class="a" style="left:4.5px;top:95px" width="15" height="15" viewBox="0 0 15 15"><path d="M2.6 5 A5.8 5.8 0 1 1 1.7 8" fill="none" stroke="#fff" stroke-width="1.3"/><path d="M1 2.5 L2.5 5.5 L5.3 4.3" fill="none" stroke="#fff" stroke-width="1.2"/><path d="M7.5 4.5 V8 H10.5" fill="none" stroke="#fff" stroke-width="1.3"/><circle cx="7.5" cy="8" r="1" fill="#fff"/></svg>
  </div>
</div>
<div id="overlay">
<!-- Continue -->
<div class="a" style="left:197px;top:166px;width:98px;height:32px;background:#3aaf6e;border-radius:5px;box-shadow:0 2px 6px rgba(0,0,0,0.2)">
  <div class="a" style="left:0;width:98px;top:7px;text-align:center;font-size:15.5px;color:#fff;-webkit-text-stroke:0.3px #fff">Continue</div>
</div>
<!-- stamp toolbar -->
<div class="a" style="left:258.5px;top:148px;width:328px;height:31px;background:#fafafa;border-radius:5px;box-shadow:0 3px 9px rgba(0,0,0,0.13)">
  <svg class="a" style="left:11px;top:6px" width="18" height="18" viewBox="0 0 18 18"><path d="M6.5 10 V7.5 C6.5 6.5 5 5.5 5 3.8 C5 2 7 1 9 1 C11 1 13 2 13 3.8 C13 5.5 11.5 6.5 11.5 7.5 V10" fill="none" stroke="#333" stroke-width="1.6"/><rect x="1.5" y="10.5" width="15" height="3.2" rx="0.8" fill="none" stroke="#333" stroke-width="1.6"/><path d="M2.5 16.5 H15.5" stroke="#333" stroke-width="1.8"/></svg>
  <div class="a" style="left:37px;top:8px;font-size:13px;color:#444">Stamp</div>
  <div class="a" style="left:87px;top:0;width:1px;height:31px;background:#e6e6e6"></div>
  <svg class="a" style="left:96px;top:7px" width="18" height="16" viewBox="0 0 18 16"><rect x="1.5" y="4.5" width="7" height="7" rx="2" fill="none" stroke="#333" stroke-width="1.8"/><rect x="9.5" y="4.5" width="7" height="7" rx="2" fill="none" stroke="#333" stroke-width="1.8"/><path d="M5.5 8 H12.5" stroke="#333" stroke-width="1.8"/><rect x="7.8" y="3" width="2.4" height="10" fill="#fff"/><path d="M5.5 8 H12.5" stroke="#333" stroke-width="1.8"/></svg>
  <div class="a" style="left:121px;top:0;width:1px;height:31px;background:#e6e6e6"></div>
  <svg class="a" style="left:134px;top:6px" width="18" height="18" viewBox="0 0 18 18"><path d="M12 4 V2.5 Q12 1.5 11 1.5 H2.5 Q1.5 1.5 1.5 2.5 V11 Q1.5 12 2.5 12 H4" fill="none" stroke="#333" stroke-width="1.6"/><rect x="5" y="5.5" width="11" height="11" rx="1" fill="none" stroke="#333" stroke-width="1.6"/><path d="M6.5 13 L13 6.5 M6.5 10 L10 6.5 M9 15 L14.5 9.5 M12 15 L14.5 12.5" stroke="#333" stroke-width="1"/></svg>
  <div class="a" style="left:163px;top:11px;width:96px;height:8.6px;background:#3aaf6e;border-radius:5px"></div>
  <div class="a" style="left:245.5px;top:5.5px;width:19.5px;height:20px;background:#fff;border:2px solid #a0a0a0;border-radius:50%"></div>
  <div class="a" style="left:279px;top:7.8px;font-size:14px;color:#444">100%</div>
</div>

<!-- signature -->
<svg class="a" style="left:470px;top:448px" width="320" height="155"><rect x="6.8" y="6" width="305" height="140.6" fill="none" stroke="#ff8c00" stroke-width="2" stroke-dasharray="6.2 4.1" stroke-dashoffset="-3"/></svg>
<div class="a" style="left:474px;top:451px;width:8px;height:8px;border:2px solid #3aaf6e;background:#fff"></div>
<div class="a" style="left:777px;top:451px;width:8px;height:8px;border:2px solid #3aaf6e;background:#fff"></div>
<div class="a" style="left:474px;top:590px;width:8px;height:8px;border:2px solid #3aaf6e;background:#fff"></div>
<div class="a" style="left:777px;top:590px;width:8px;height:8px;border:2px solid #3aaf6e;background:#fff"></div>
<svg class="a" style="left:0;top:0;overflow:visible" width="1474" height="876">
 <g fill="none" stroke="#000" stroke-width="27" stroke-linecap="round" stroke-linejoin="round" transform="translate(470 460) scale(0.11416)">
  <path d="M30,268 C100,250 200,248 290,247 C380,247 450,252 515,262"/>
  <path d="M290,235 C340,340 410,480 410,570 C410,660 340,700 270,698 C200,696 150,660 110,620"/>
  <path d="M600,475 C650,505 690,540 680,590 C665,650 580,690 520,695 C470,698 440,670 445,620 C450,560 510,470 560,440 C600,420 660,430 670,460"/>
  <path d="M820,120 C840,150 830,250 800,350 C770,460 740,600 735,690"/>
  <path d="M755,545 C800,470 850,440 890,445 C930,455 920,540 910,600 C905,640 895,680 892,695"/>
  <path d="M1030,440 C1020,520 990,620 970,705"/>
  <path d="M1020,550 C1070,480 1120,450 1170,450 C1210,460 1190,560 1175,620 C1165,660 1150,700 1145,705"/>
  <g fill="#000" stroke="none"><circle cx="45" cy="265" r="22"/><circle cx="292" cy="236" r="24"/><circle cx="655" cy="455" r="22"/><circle cx="818" cy="122" r="22"/><circle cx="1030" cy="445" r="20"/><circle cx="735" cy="690" r="18"/></g>
 </g>
 <g fill="none" stroke="#000" stroke-width="27" stroke-linecap="round" stroke-linejoin="round" transform="translate(625 460) scale(0.11534)">
  <path d="M385,350 C400,300 380,260 320,250 C250,245 180,280 160,320 C140,370 180,400 270,425 C400,460 490,520 480,590 C470,660 390,705 280,705 C190,705 140,690 95,668"/>
  <path d="M565,495 C560,560 545,640 530,705"/>
  <path d="M540,620 C570,560 620,510 655,505 C660,540 640,620 620,685"/>
  <path d="M620,680 C680,560 780,390 880,330 C905,320 900,380 870,450 C830,540 760,640 740,760"/>
  <path d="M955,350 L950,370"/>
  <path d="M920,460 C900,540 885,620 880,700"/>
  <path d="M1100,165 C1080,280 1040,400 1020,480 C1000,580 1000,650 1000,700"/>
  <path d="M975,410 C1100,400 1250,370 1385,385"/>
  <path d="M1175,120 C1195,160 1180,260 1150,380 C1110,520 1090,620 1090,690"/>
  <path d="M1105,560 C1140,480 1190,440 1230,440 C1280,450 1270,560 1260,620 C1255,650 1250,680 1245,690"/>
  <g fill="#000" stroke="none"><circle cx="388" cy="345" r="20"/><circle cx="565" cy="497" r="20"/><circle cx="955" cy="350" r="22"/><circle cx="1100" cy="168" r="22"/><circle cx="1173" cy="122" r="22"/><circle cx="985" cy="412" r="20"/><circle cx="535" cy="700" r="16"/><circle cx="1092" cy="685" r="16"/></g>
 </g>
</svg>
<!-- sig toolbar -->
<div class="a" style="left:477px;top:417px;width:249px;height:33px;background:#f3f3f3;border-radius:4px;box-shadow:0 2px 5px rgba(0,0,0,0.25)">
  <div class="a" style="left:35px;top:0;width:1px;height:33px;background:#dedede"></div>
  <div class="a" style="left:70px;top:0;width:1px;height:33px;background:#dedede"></div>
  <div class="a" style="left:106px;top:0;width:1px;height:33px;background:#dedede"></div>
  <div class="a" style="left:142px;top:0;width:1px;height:33px;background:#dedede"></div>
  <div class="a" style="left:213px;top:0;width:1px;height:33px;background:#dedede"></div>
  <svg class="a" style="left:8px;top:8px" width="20" height="18" viewBox="0 0 20 18"><path d="M1.5 1.5 L9 5 L5.5 6 L4.5 9.5 Z" fill="#444" stroke="#444" stroke-width="1" stroke-linejoin="round"/><path d="M12 8 V17 M7.5 12.5 H16.5" stroke="#444" stroke-width="1.5"/><path d="M10.5 9.5 L12 8 L13.5 9.5 M10.5 15.5 L12 17 L13.5 15.5 M9 11 L7.5 12.5 L9 14 M15 11 L16.5 12.5 L15 14" fill="none" stroke="#444" stroke-width="1.3"/></svg>
  <div class="a" style="left:42.5px;top:9.5px;font-size:12.5px;font-weight:400;color:#444;-webkit-text-stroke:0.45px #444">OK</div>
  <svg class="a" style="left:79px;top:7px" width="20" height="20" viewBox="0 0 20 20"><path d="M1.5 3.5 V2 H11 V3.5 M6.2 2 V17 M4 17 H8.5" fill="none" stroke="#444" stroke-width="1.8"/><path d="M14.5 17.5 V6.5 M11.8 9.5 L14.5 6.5 L17.2 9.5" fill="none" stroke="#444" stroke-width="1.7"/></svg>
  <svg class="a" style="left:115px;top:7px" width="20" height="20" viewBox="0 0 20 20"><path d="M1.5 3.5 V2 H11 V3.5 M6.2 2 V17 M4 17 H8.5" fill="none" stroke="#444" stroke-width="1.8"/><path d="M14.5 6 V17 M11.8 14 L14.5 17 L17.2 14" fill="none" stroke="#444" stroke-width="1.7"/></svg>
  <svg class="a" style="left:155px;top:9px" width="16" height="16" viewBox="0 0 16 16"><path d="M1.5 14.5 L2 11.5 L10.5 3 L13 5.5 L4.5 14 Z" fill="#444"/><path d="M11.5 2 L12.5 1 L15 3.5 L14 4.5 Z" fill="#444"/></svg>
  <div class="a" style="left:178px;top:9.5px;font-size:13.5px;color:#444;-webkit-text-stroke:0.35px #444">Edit</div>
  <svg class="a" style="left:222px;top:8px" width="18" height="18" viewBox="0 0 18 18"><path d="M1.5 4 H16.5 M6 4 V1.8 H12 V4" fill="none" stroke="#444" stroke-width="1.7"/><path d="M3.2 4.5 L4 16.5 H14 L14.8 4.5 Z" fill="none" stroke="#444" stroke-width="1.8"/><path d="M7 7 V14 M9 7 V14 M11 7 V14" stroke="#444" stroke-width="1.2"/></svg>
</div>

<!-- bottom nav -->
<div class="a" style="left:636px;top:804px;width:362px;height:41px;background:#555;border-radius:21px;box-shadow:0 1px 3px rgba(0,0,0,0.12)">
  <svg class="a" style="left:22px;top:14px" width="14" height="12" viewBox="0 0 14 12"><path d="M2.5 8.5 L7 4 L11.5 8.5" fill="none" stroke="#fff" stroke-width="2.3"/></svg>
  <div class="a" style="left:47px;top:8.5px;width:37px;height:24.5px;background:#464646;border-radius:4px;color:#fff;font-size:14px;text-align:center;line-height:24.5px">5</div>
  <div class="a" style="left:89px;top:12px;font-size:14.5px;color:#fff">/ 5</div>
  <svg class="a" style="left:117px;top:14px" width="14" height="12" viewBox="0 0 14 12"><path d="M2.5 3.5 L7 8 L11.5 3.5" fill="none" stroke="#9a9a9a" stroke-width="2"/></svg>
  <div class="a" style="left:149px;top:0;width:1px;height:41px;background:#444"></div>
  <svg class="a" style="left:167px;top:14px" width="14" height="12" viewBox="0 0 14 12"><path d="M1 6 H13" stroke="#fff" stroke-width="2.2"/></svg>
  <div class="a" style="left:193px;top:8.5px;width:49px;height:24.5px;background:#464646;border-radius:4px;color:#fff;font-size:14px;text-align:center;line-height:24.5px">200%</div>
  <svg class="a" style="left:254px;top:13px" width="14" height="14" viewBox="0 0 14 14"><path d="M1 7 H13 M7 1 V13" stroke="#fff" stroke-width="2.2"/></svg>
  <div class="a" style="left:286px;top:0;width:1px;height:41px;background:#444"></div>
  <svg class="a" style="left:303px;top:12px" width="18" height="17" viewBox="0 0 18 17"><rect x="1" y="1.5" width="16" height="14" rx="2" fill="none" stroke="#fff" stroke-width="1.8"/><path d="M7 5.5 L4.5 8.5 L7 11.5 M11 5.5 L13.5 8.5 L11 11.5" fill="none" stroke="#fff" stroke-width="1.6"/></svg>
  <div class="a" style="left:324px;top:10.5px;font-size:15px;color:#fff">Fit</div>
</div>
<!-- help -->
<div class="a" style="left:1371px;top:804px;width:41px;height:41px;background:#ff5722;border-radius:50%">
  <svg class="a" style="left:0;top:0" width="41" height="41" viewBox="0 0 41 41"><path d="M14.6 16.5 C14.6 12.5 17.3 10.2 20.5 10.2 C23.7 10.2 26.3 12.5 26.3 15.5 C26.3 18.8 23 19.8 20.5 22 V23.8" fill="none" stroke="#fff" stroke-width="3" stroke-linecap="round"/><circle cx="20.5" cy="28.7" r="2" fill="#fff"/></svg>
</div>
<svg class="a" style="left:0;top:0" width="4" height="4" viewBox="0 0 4 4"><path d="M0 0 H3 Q0 0 0 3 Z" fill="#2f6b3f"/></svg>
<svg class="a" style="left:1470px;top:872px" width="4" height="4" viewBox="0 0 4 4"><path d="M4 4 H1 Q4 4 4 1 Z" fill="#2f6b3f"/></svg>
</div><!--endoverlay-->
</body></html>
